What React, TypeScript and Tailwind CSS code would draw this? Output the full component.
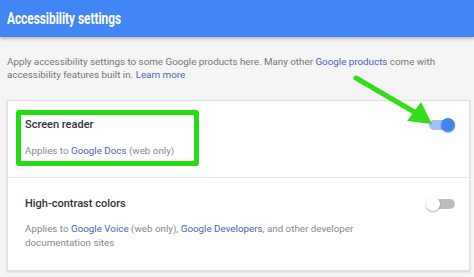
import React from 'react';

export default function App() {
  return (
    <div className="relative w-[474px] h-[277px] overflow-hidden bg-[#f5f5f5] font-['Roboto',sans-serif]">
      <header className="h-[37px] bg-[#4285f4] px-[7px] flex items-center shadow-[0_2px_3px_rgba(0,0,0,0.25)] relative z-10">
        <h1 className="text-white text-[16px] leading-[20px] font-bold origin-left scale-x-[0.74] whitespace-nowrap">Accessibility settings</h1>
      </header>

      <p className="px-[7px] pt-[18px] text-[9.8px] leading-[13px] text-[#757575]">
        Apply accessibility settings to some Google products here. Many other{' '}
        <span className="text-[#4a64b2]">Google products</span> come with accessibility features built in.{' '}
        <span className="text-[#4a64b2]">Learn more</span>
      </p>

      <div className="mx-[7px] mt-[19px] w-[463px] bg-white border border-[#e0e0e0] shadow-[0_1px_2px_rgba(0,0,0,0.15)]">
        {/* Screen reader */}
        <div className="h-[77px] px-[17px] pt-[17px] flex justify-between border-b border-[#e6e6e6]">
          <div>
            <p className="text-[11px] leading-[14px] font-medium text-[#333]">Screen reader</p>
            <p className="mt-[12px] text-[9.8px] leading-[13px] text-[#888]">
              Applies to <span className="text-[#4a64b2]">Google Docs</span> (web only)
            </p>
          </div>
          <div className="relative w-[28px] h-[16px] mt-[-1px] mr-[-3px]">
            <div className="absolute left-[2px] top-[3px] w-[25px] h-[10px] rounded-full bg-[#a3bff3]" />
            <div className="absolute right-0 top-[1px] w-[14px] h-[14px] rounded-full bg-[#4285f4] shadow-[0_1px_2px_rgba(0,0,0,0.3)]" />
          </div>
        </div>

        {/* High-contrast colors */}
        <div className="h-[92px] px-[17px] pt-[19px] flex justify-between">
          <div>
            <p className="text-[11px] leading-[14px] font-medium text-[#333]">High-contrast colors</p>
            <p className="mt-[11px] text-[9.8px] leading-[14px] text-[#888] w-[340px]">
              Applies to <span className="text-[#4a64b2]">Google Voice</span> (web only),{' '}
              <span className="text-[#4a64b2]">Google Developers</span>, and other developer documentation sites
            </p>
          </div>
          <div className="relative w-[28px] h-[16px] mt-[-1px] mr-[-3px]">
            <div className="absolute left-[1px] top-[3px] w-[27px] h-[10px] rounded-full bg-[#bdbdbd]" />
            <div className="absolute left-[-1px] top-[1px] w-[14px] h-[14px] rounded-full bg-white shadow-[0_1px_2px_rgba(0,0,0,0.35)]" />
          </div>
        </div>
      </div>

      {/* annotation: green highlight box */}
      <div className="absolute left-[16px] top-[110px] w-[183px] h-[56px] border-[5px] border-[#22dd11] rounded-[3px]" />

      {/* annotation: green arrow */}
      <svg className="absolute left-0 top-0" width="474" height="277" viewBox="0 0 474 277">
        <line x1="356" y1="78" x2="416" y2="113" stroke="#33dd1a" strokeWidth="5" strokeLinecap="round" />
        <polygon points="407,121 421,102 432,124" fill="#33dd1a" />
      </svg>
    </div>
  );
}
